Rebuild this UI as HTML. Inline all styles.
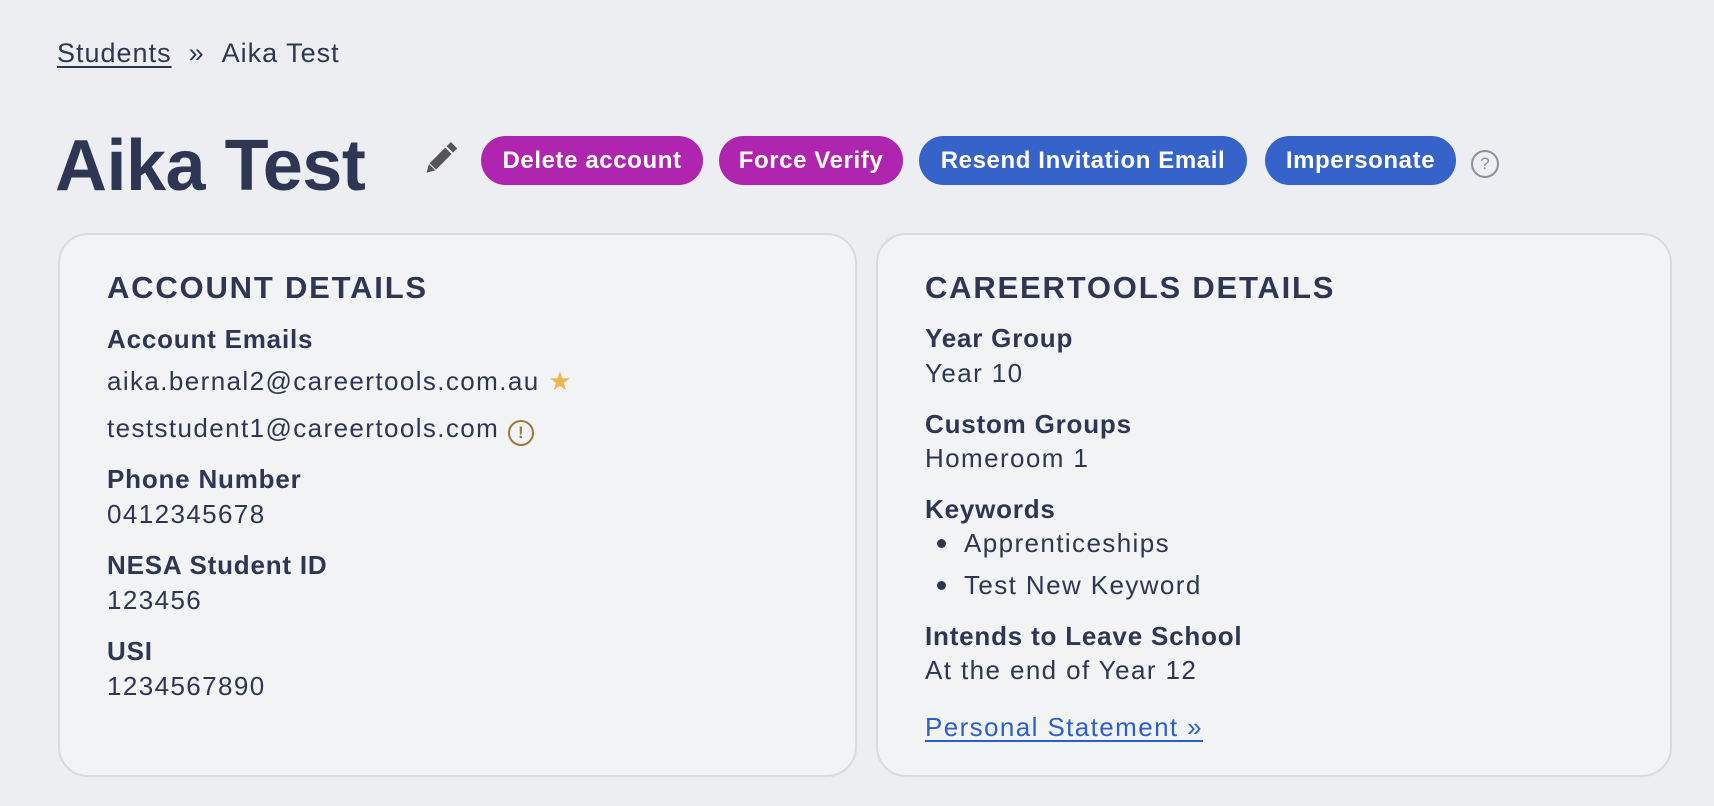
<!DOCTYPE html>
<html><head><meta charset="utf-8"><style>
body{margin:0;width:1714px;height:806px;background:#edeef1;font-family:"Liberation Sans",sans-serif;color:#2e3653;position:relative;overflow:hidden}
.a{position:absolute;white-space:nowrap;line-height:1}
.b{font-weight:bold;letter-spacing:0.8px!important}
.btn{position:absolute;top:136px;height:49px;border-radius:25px;color:#fff;font-weight:bold;font-size:24px;line-height:49px;text-align:center;letter-spacing:0.6px}
.card{position:absolute;top:233px;height:544px;border:2px solid #d9dadd;border-radius:30px;background:#f2f3f5;box-sizing:border-box}
.t{font-size:26px;letter-spacing:1.4px}
.h{font-size:31px;font-weight:bold;letter-spacing:1.8px}
</style></head><body>
<div class="a" style="left:57px;top:40px;font-size:27px;letter-spacing:1px"><span style="text-decoration:underline;text-underline-offset:4px">Students</span>&nbsp;&nbsp;»&nbsp;&nbsp;Aika Test</div>
<div class="a" style="left:55px;top:130px;font-size:72px;font-weight:bold;letter-spacing:-0.5px">Aika Test</div>
<svg class="a" style="left:420px;top:138px" width="42" height="42" viewBox="0 0 42 42"><g transform="rotate(45 21 21)"><rect x="16" y="2" width="9" height="6" fill="#555"/><rect x="16" y="10" width="9" height="22" fill="#555"/><path d="M16 33 L25 33 L20.5 41 Z" fill="#555"/></g></svg>
<div class="btn" style="left:481px;width:222px;background:#b025b0">Delete account</div>
<div class="btn" style="left:719px;width:184px;background:#b025b0">Force Verify</div>
<div class="btn" style="left:919px;width:328px;background:#3563c9">Resend Invitation Email</div>
<div class="btn" style="left:1265px;width:191px;background:#3563c9">Impersonate</div>
<div class="a" style="left:1471px;top:150px;width:24px;height:24px;border:2px solid #8a90a3;border-radius:50%;color:#8a90a3;font-size:17px;line-height:24px;text-align:center">?</div>

<div class="card" style="left:58px;width:799px"></div>
<div class="card" style="left:876px;width:796px"></div>

<div class="a h" style="left:107px;top:272px">ACCOUNT DETAILS</div>
<div class="a t b" style="left:107px;top:326px">Account Emails</div>
<div class="a t" style="left:107px;top:368px">aika.bernal2@careertools.com.au <span style="color:#eeb54a">★</span></div>
<div class="a t" style="left:107px;top:415px">teststudent1@careertools.com <span style="display:inline-block;width:22px;height:22px;border:2px solid #9a7a3a;border-radius:50%;color:#9a7a3a;font-size:17px;line-height:22px;text-align:center;font-weight:bold;vertical-align:-1px;letter-spacing:0">!</span></div>
<div class="a t b" style="left:107px;top:466px">Phone Number</div>
<div class="a t" style="left:107px;top:501px">0412345678</div>
<div class="a t b" style="left:107px;top:552px">NESA Student ID</div>
<div class="a t" style="left:107px;top:587px">123456</div>
<div class="a t b" style="left:107px;top:638px">USI</div>
<div class="a t" style="left:107px;top:673px">1234567890</div>

<div class="a h" style="left:925px;top:272px">CAREERTOOLS DETAILS</div>
<div class="a t b" style="left:925px;top:325px">Year Group</div>
<div class="a t" style="left:925px;top:360px">Year 10</div>
<div class="a t b" style="left:925px;top:411px">Custom Groups</div>
<div class="a t" style="left:925px;top:445px">Homeroom 1</div>
<div class="a t b" style="left:925px;top:496px">Keywords</div>
<div class="a" style="left:937px;top:539px;width:9px;height:9px;border-radius:50%;background:#2e3653"></div>
<div class="a t" style="left:964px;top:530px">Apprenticeships</div>
<div class="a" style="left:937px;top:581px;width:9px;height:9px;border-radius:50%;background:#2e3653"></div>
<div class="a t" style="left:964px;top:572px">Test New Keyword</div>
<div class="a t b" style="left:925px;top:623px">Intends to Leave School</div>
<div class="a t" style="left:925px;top:657px">At the end of Year 12</div>
<div class="a t" style="left:925px;top:714px;color:#2b5fd0;text-decoration:underline;text-underline-offset:4px">Personal Statement »</div>
</body></html>
